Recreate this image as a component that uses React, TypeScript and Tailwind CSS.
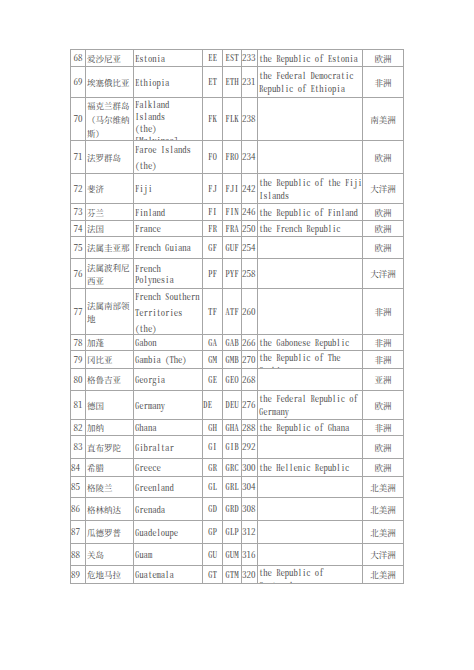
import React from "react";

type Row = {
  no: string;
  cn: string[];
  en: string[];
  a2: string;
  a3: string;
  num: string;
  full: string[];
  ct: string;
  noLeft?: boolean;
  a2Left?: boolean;
  cnLh?: string;
  enLh?: string;
  enTop?: boolean;
  fullTop?: boolean;
};

const rows: Row[] = [
  { no: "68", cn: ["爱沙尼亚"], en: ["Estonia"], a2: "EE", a3: "EST", num: "233", full: ["the Republic of Estonia"], ct: "欧洲" },
  { no: "69", cn: ["埃塞俄比亚"], en: ["Ethiopia"], a2: "ET", a3: "ETH", num: "231", full: ["the Federal Democratic", "Republic of Ethiopia"], ct: "非洲" },
  {
    no: "70",
    cn: ["福克兰群岛", "（马尔维纳", "斯）"],
    en: ["Falkland", "Islands", "(the)", "[Malvinas]"],
    a2: "FK",
    a3: "FLK",
    num: "238",
    full: [],
    ct: "南美洲",
    cnLh: "leading-[14px]",
    enLh: "leading-[12px]",
    enTop: true,
  },
  { no: "71", cn: ["法罗群岛"], en: ["Faroe Islands", "(the)"], a2: "FO", a3: "FRO", num: "234", full: [], ct: "欧洲", enLh: "leading-[16px]" },
  { no: "72", cn: ["斐济"], en: ["Fiji"], a2: "FJ", a3: "FJI", num: "242", full: ["the Republic of the Fiji", "Islands"], ct: "大洋洲" },
  { no: "73", cn: ["芬兰"], en: ["Finland"], a2: "FI", a3: "FIN", num: "246", full: ["the Republic of Finland"], ct: "欧洲" },
  { no: "74", cn: ["法国"], en: ["France"], a2: "FR", a3: "FRA", num: "250", full: ["the French Republic"], ct: "欧洲" },
  { no: "75", cn: ["法属圭亚那"], en: ["French Guiana"], a2: "GF", a3: "GUF", num: "254", full: [], ct: "欧洲" },
  { no: "76", cn: ["法属波利尼", "西亚"], en: ["French", "Polynesia"], a2: "PF", a3: "PYF", num: "258", full: [], ct: "大洋洲", enLh: "leading-[11px]" },
  { no: "77", cn: ["法属南部领", "地"], en: ["French Southern", "Territories", "(the)"], a2: "TF", a3: "ATF", num: "260", full: [], ct: "非洲", enLh: "leading-[16px]" },
  { no: "78", cn: ["加蓬"], en: ["Gabon"], a2: "GA", a3: "GAB", num: "266", full: ["the Gabonese Republic"], ct: "非洲" },
  { no: "79", cn: ["冈比亚"], en: ["Gambia (The)"], a2: "GM", a3: "GMB", num: "270", full: ["the Republic of The", "Gambia"], ct: "非洲", fullTop: true },
  { no: "80", cn: ["格鲁吉亚"], en: ["Georgia"], a2: "GE", a3: "GEO", num: "268", full: [], ct: "亚洲" },
  { no: "81", cn: ["德国"], en: ["Germany"], a2: "DE", a3: "DEU", num: "276", full: ["the Federal Republic of", "Germany"], ct: "欧洲", a2Left: true },
  { no: "82", cn: ["加纳"], en: ["Ghana"], a2: "GH", a3: "GHA", num: "288", full: ["the Republic of Ghana"], ct: "非洲" },
  { no: "83", cn: ["直布罗陀"], en: ["Gibraltar"], a2: "GI", a3: "GIB", num: "292", full: [], ct: "欧洲" },
  { no: "84", cn: ["希腊"], en: ["Greece"], a2: "GR", a3: "GRC", num: "300", full: ["the Hellenic Republic"], ct: "欧洲", noLeft: true },
  { no: "85", cn: ["格陵兰"], en: ["Greenland"], a2: "GL", a3: "GRL", num: "304", full: [], ct: "北美洲", noLeft: true },
  { no: "86", cn: ["格林纳达"], en: ["Grenada"], a2: "GD", a3: "GRD", num: "308", full: [], ct: "北美洲", noLeft: true },
  { no: "87", cn: ["瓜德罗普"], en: ["Guadeloupe"], a2: "GP", a3: "GLP", num: "312", full: [], ct: "北美洲", noLeft: true },
  { no: "88", cn: ["关岛"], en: ["Guam"], a2: "GU", a3: "GUM", num: "316", full: [], ct: "大洋洲", noLeft: true },
  { no: "89", cn: ["危地马拉"], en: ["Guatemala"], a2: "GT", a3: "GTM", num: "320", full: ["the Republic of", "Guatemala"], ct: "北美洲", noLeft: true, fullTop: true },
];

// SimSun-like look: Noto Serif CJK; Latin cells use its half-width forms
const song = "font-['Noto_Serif_CJK_SC','Noto_Sans_CJK_SC',serif]";
const half = "[font-feature-settings:'hwid']";
const code = `${song} ${half} text-[9px] leading-[12px]`;
const cjk = `${song} text-[8.5px]`;
const latin = `${song} ${half} text-[8.6px]`;

function Cell({
  lines,
  className,
  top,
}: {
  lines: string[];
  className: string;
  top?: boolean;
}) {
  return (
    <div
      className={`bg-white overflow-hidden flex flex-col text-[#474747] ${
        top ? "justify-start" : "justify-center"
      } ${className}`}
    >
      {lines.map((l, i) => (
        <div key={i} className="whitespace-nowrap">
          {l}
        </div>
      ))}
    </div>
  );
}

export default function App() {
  return (
    <div className="w-[474px] h-[670px] bg-white pt-[49px] pl-[70px]">
      <div className="grid w-fit gap-px p-px bg-[#a6a6a6] grid-cols-[14px_47px_68px_19px_18px_15px_104px_40px] grid-rows-[16px_30px_42px_32px_29px_16px_15px_21px_29px_45px_15px_17px_21px_28px_15px_22px_17px_20px_22px_22px_21px_17px]">
        {rows.map((r) => (
          <React.Fragment key={r.no}>
            <Cell
              lines={[r.no]}
              className={`${code} ${r.noLeft ? "items-start" : "items-center"}`}
            />
            <Cell
              lines={r.cn}
              className={`${cjk} ${r.cnLh ?? "leading-[13px]"} items-start pl-px`}
            />
            <Cell
              lines={r.en}
              className={`${latin} ${r.enLh ?? "leading-[13px]"} items-start pl-px`}
              top={r.enTop}
            />
            <Cell
              lines={[r.a2]}
              className={`${code} ${r.a2Left ? "items-start" : "items-center"}`}
            />
            <Cell lines={[r.a3]} className={`${code} items-center`} />
            <Cell lines={[r.num]} className={`${code} items-start`} />
            <Cell
              lines={r.full}
              className={`${latin} leading-[13px] items-start pl-px`}
              top={r.fullTop}
            />
            <Cell lines={[r.ct]} className={`${cjk} leading-[13px] items-center`} />
          </React.Fragment>
        ))}
      </div>
    </div>
  );
}
